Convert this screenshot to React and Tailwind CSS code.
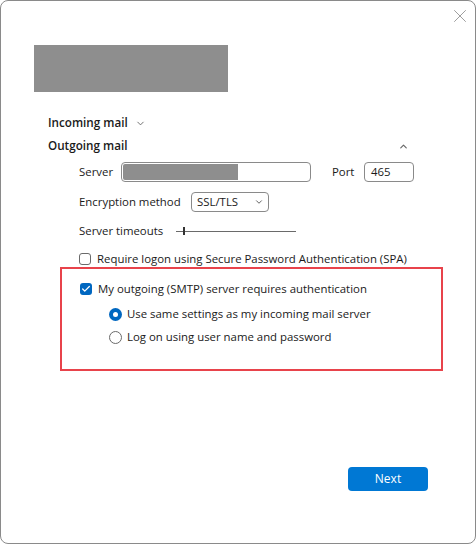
import { ChevronDown, ChevronUp, X, Check } from 'lucide-react';

const font = { fontFamily: '"Open Sans", "Noto Sans", sans-serif' };

export default function App() {
  return (
    <div className="w-[476px] h-[544px] bg-white" style={font}>
      <div className="relative w-full h-full border border-[#8a8a8a] rounded-[8px] flex flex-col text-[11.4px] text-[#1a1a1a]">
        {/* close */}
        <button className="absolute top-[4px] right-[4px] w-[22px] h-[22px] flex items-center justify-center text-[#7a7a7a]">
          <X size={22} strokeWidth={0.8} />
        </button>

        {/* redacted logo */}
        <div className="ml-[33px] mt-[44px] w-[194px] h-[47px] bg-[#8e8e8e]" />

        {/* sections */}
        <div className="ml-[47px] mt-[22px] flex items-center gap-[7px] h-[18px] text-[11.7px] font-semibold">
          Incoming mail
          <ChevronDown size={11} strokeWidth={2} className="text-[#666] mt-[1px]" />
        </div>
        <div className="ml-[47px] mr-[66px] mt-[5px] flex items-center justify-between h-[18px] text-[11.7px] font-semibold">
          Outgoing mail
          <ChevronUp size={11} strokeWidth={2.5} className="text-[#666]" />
        </div>

        <div className="ml-[78px] mt-[7px] flex flex-col">
          {/* server row */}
          <div className="flex items-center h-[20px]">
            <span className="w-[42px]">Server</span>
            <div className="w-[190px] h-[20px] border border-[#8a8a8a] rounded-[4px] p-[1px] flex">
              <div className="w-[115px] h-full bg-[#8e8e8e] rounded-l-[2px]" />
            </div>
            <span className="ml-[21px] w-[32px]">Port</span>
            <div className="w-[50px] h-[20px] border border-[#8a8a8a] rounded-[4px] px-[6px] flex items-center">465</div>
          </div>

          {/* encryption */}
          <div className="flex items-center h-[20px] mt-[10px]">
            <span className="w-[112px]">Encryption method</span>
            <div className="w-[78px] h-[20px] border border-[#8a8a8a] rounded-[4px] pl-[5px] pr-[4px] flex items-center justify-between">
              SSL/TLS
              <ChevronDown size={10} strokeWidth={2} className="text-[#444]" />
            </div>
          </div>

          {/* timeouts */}
          <div className="flex items-center h-[20px] mt-[9px]">
            <span className="w-[97px]">Server timeouts</span>
            <div className="relative w-[120px] h-[10px] flex items-center">
              <div className="w-full h-px bg-[#6a6a6a]" />
              <div className="absolute left-[7px] top-[1px] w-[2px] h-[8px] bg-[#333]" />
            </div>
          </div>

          {/* SPA */}
          <div className="flex items-center h-[16px] mt-[10px]">
            <div className="w-[12px] h-[12px] border border-[#6a6a6a] rounded-[3px]" />
            <span className="ml-[6px]">Require logon using Secure Password Authentication (SPA)</span>
          </div>
        </div>

        {/* highlighted block */}
        <div className="ml-[59px] w-[383px] h-[104px] border-2 border-[#e8434b] pl-[18px] pt-[11px] flex flex-col">
          <div className="flex items-center h-[18px]">
            <div className="w-[12px] h-[12px] rounded-[3px] bg-[#0067c0] flex items-center justify-center">
              <Check size={10} strokeWidth={3} className="text-white" />
            </div>
            <span className="ml-[6px]">My outgoing (SMTP) server requires authentication</span>
          </div>
          <div className="ml-[29px] mt-[7px] flex items-center h-[18px]">
            <div className="w-[13px] h-[13px] rounded-full bg-[#0067c0] flex items-center justify-center">
              <div className="w-[5px] h-[5px] rounded-full bg-white" />
            </div>
            <span className="ml-[5px]">Use same settings as my incoming mail server</span>
          </div>
          <div className="ml-[29px] mt-[5px] flex items-center h-[18px]">
            <div className="w-[13px] h-[13px] rounded-full border border-[#6a6a6a]" />
            <span className="ml-[5px]">Log on using user name and password</span>
          </div>
        </div>

        <div className="flex justify-end mr-[47px] mt-[96px]">
          <button className="w-[80px] h-[24px] rounded-[4px] bg-[#0078d4] text-white text-[12px] flex items-center justify-center">
            Next
          </button>
        </div>
      </div>
    </div>
  );
}
